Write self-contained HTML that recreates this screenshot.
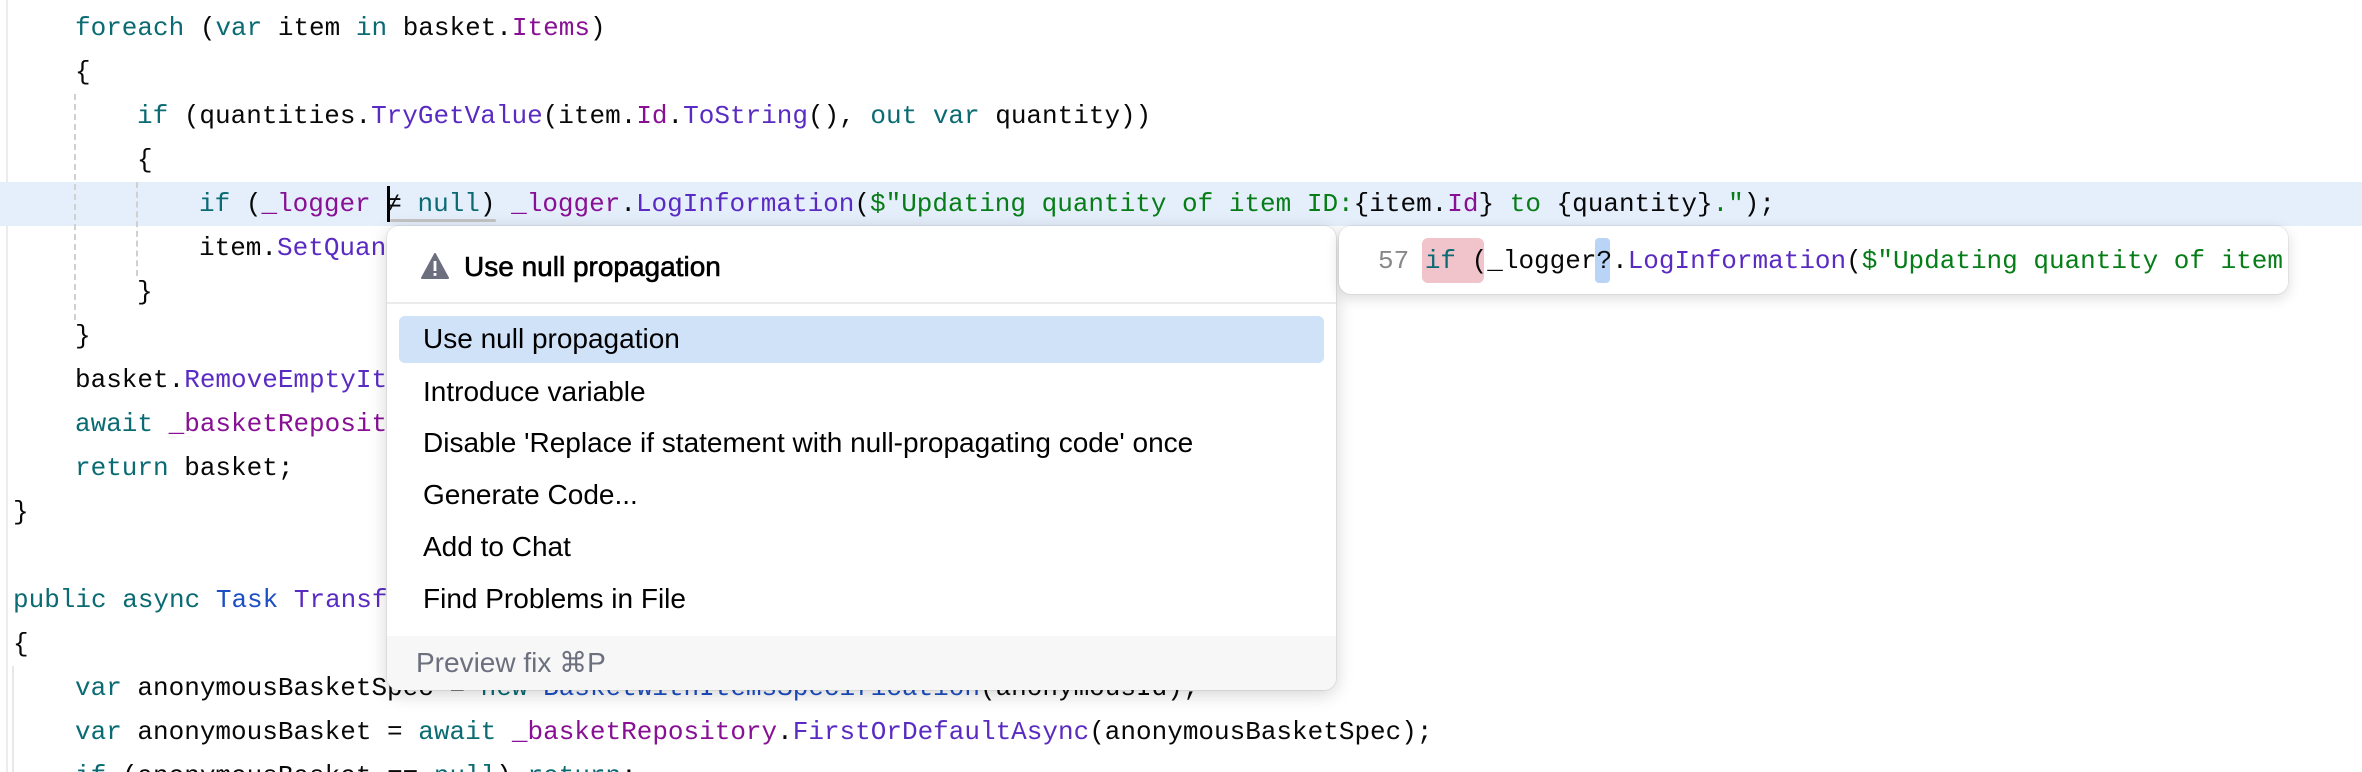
<!DOCTYPE html>
<html><head><meta charset="utf-8"><style>
html,body{margin:0;padding:0;background:#fff;width:2362px;height:772px;overflow:hidden;position:relative}
.code{position:absolute;left:0;font-family:"Liberation Mono",monospace;font-size:26px;line-height:44px;height:44px;white-space:pre;color:#080808}
.k{color:#0b6b73}.p{color:#871094}.m{color:#5a2bc2}.s{color:#067d17}.t{color:#1d4fc4}
.hl{position:absolute;left:0;top:182px;width:2362px;height:44px;background:#e5eefb}
.guide{position:absolute;width:0;border-left:2px dashed #d0d0d0}
.pop{position:absolute;left:387px;top:226px;width:949px;height:464px;background:#fff;border-radius:12px;box-shadow:0 4px 18px rgba(0,0,0,.18),0 0 0 1px rgba(0,0,0,.06);overflow:hidden;font-family:"Liberation Sans",sans-serif;font-size:28px;color:#000}
.item{position:absolute;left:36px;height:50px;line-height:50px}
.prev{position:absolute;left:1339px;top:226px;width:949px;height:68px;background:#fff;border-radius:12px;box-shadow:0 4px 14px rgba(0,0,0,.15),0 0 0 1px rgba(0,0,0,.05);overflow:hidden}
</style></head><body>
<div style="position:absolute;left:6px;top:0;width:2px;height:772px;background:#ececec"></div>
<div class="hl"></div>
<div class="guide" style="left:74px;top:94px;height:226px"></div>
<div class="guide" style="left:136px;top:182px;height:94px"></div>
<div class="guide" style="left:12px;top:666px;height:106px;border-left:2px solid #e8e8e8"></div>

<div class="code" style="top:6px;left:75px"><span class="k">foreach</span> (<span class="k">var</span> item <span class="k">in</span> basket.<span class="p">Items</span>)</div>
<div class="code" style="top:50px;left:75px">{</div>
<div class="code" style="top:94px;left:137px"><span class="k">if</span> (quantities.<span class="m">TryGetValue</span>(item.<span class="p">Id</span>.<span class="m">ToString</span>(), <span class="k">out var</span> quantity))</div>
<div class="code" style="top:138px;left:137px">{</div>
<div class="code" style="top:182px;left:199px"><span class="k">if</span> (<span class="p">_logger</span> ≠ <span class="k">null</span>) <span class="p">_logger</span>.<span class="m">LogInformation</span>(<span class="s">$"Updating quantity of item ID:</span>{item.<span class="p">Id</span>}<span class="s"> to </span>{quantity}<span class="s">."</span>);</div>
<div style="position:absolute;left:387px;top:186px;width:3px;height:36px;background:#000"></div>
<div style="position:absolute;left:390px;top:219px;width:106px;height:3px;background:#c4c4c4;border-radius:2px"></div>
<div class="code" style="top:226px;left:199px">item.<span class="m">SetQuantity</span></div>
<div class="code" style="top:270px;left:137px">}</div>
<div class="code" style="top:314px;left:75px">}</div>
<div class="code" style="top:358px;left:75px">basket.<span class="m">RemoveEmptyItems</span></div>
<div class="code" style="top:402px;left:75px"><span class="k">await</span> <span class="p">_basketRepository</span></div>
<div class="code" style="top:446px;left:75px"><span class="k">return</span> basket;</div>
<div class="code" style="top:490px;left:13px">}</div>
<div class="code" style="top:578px;left:13px"><span class="k">public async</span> <span class="t">Task</span> <span class="m">TransferBasket</span></div>
<div class="code" style="top:622px;left:13px">{</div>
<div class="code" style="top:666px;left:75px"><span class="k">var</span> anonymousBasketSpec = <span class="k">new</span> <span class="t">BasketWithItemsSpecification</span>(anonymousId);</div>
<div class="code" style="top:710px;left:75px"><span class="k">var</span> anonymousBasket = <span class="k">await</span> <span class="p">_basketRepository</span>.<span class="m">FirstOrDefaultAsync</span>(anonymousBasketSpec);</div>
<div class="code" style="top:754px;left:75px"><span class="k">if</span> (anonymousBasket == <span class="k">null</span>) <span class="k">return</span>;</div>

<div class="pop">
  <svg style="position:absolute;left:34px;top:27px" width="28" height="26" viewBox="0 0 28 26"><path d="M14 1 L27 25 L1 25 Z" fill="#6c707e" stroke="#6c707e" stroke-linejoin="round" stroke-width="2"/><rect x="12.6" y="8" width="2.8" height="10" fill="#fff"/><rect x="12.6" y="20" width="2.8" height="2.8" fill="#fff"/></svg>
  <div style="position:absolute;left:77px;top:16px;line-height:50px;-webkit-text-stroke:0.6px #000">Use null propagation</div>
  <div style="position:absolute;left:0;top:76px;width:949px;height:2px;background:#ebebeb"></div>
  <div style="position:absolute;left:12px;top:90px;width:925px;height:47px;background:#d0e2f8;border-radius:6px"></div>
  <div class="item" style="top:88px">Use null propagation</div>
  <div class="item" style="top:141px">Introduce variable</div>
  <div class="item" style="top:192px">Disable 'Replace if statement with null-propagating code' once</div>
  <div class="item" style="top:244px">Generate Code...</div>
  <div class="item" style="top:296px">Add to Chat</div>
  <div class="item" style="top:348px">Find Problems in File</div>
  <div style="position:absolute;left:0;top:410px;width:949px;height:54px;background:#f7f7f7"></div>
  <div style="position:absolute;left:29px;top:412px;line-height:50px;color:#6c707e">Preview fix ⌘P</div>
</div>

<div class="prev">
  <div style="position:absolute;left:83px;top:12px;width:62px;height:45px;background:#f1c3cb;border-radius:6px"></div>
  <div style="position:absolute;left:256px;top:12px;width:15px;height:45px;background:#b9d4f6;border-radius:4px"></div>
  <div class="code" style="top:13px;left:39px"><span style="color:#888">57</span> <span class="k">if</span> (_logger?.<span class="m">LogInformation</span>(<span class="s">$"Updating quantity of item</span></div>
</div>
</body></html>
